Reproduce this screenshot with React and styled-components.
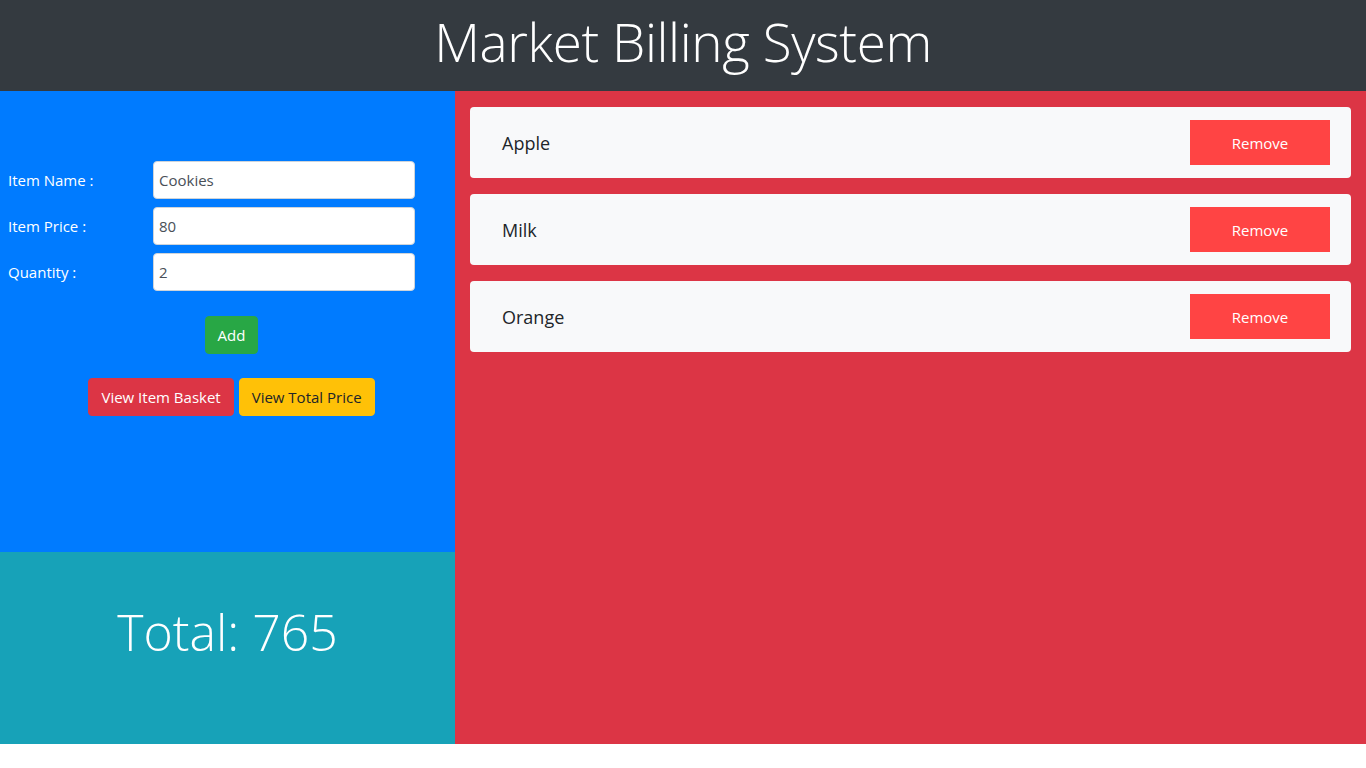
import React, { useState } from 'react';
import styled, { createGlobalStyle } from 'styled-components';

const GlobalStyle = createGlobalStyle`
  * { box-sizing: border-box; }
  body {
    margin: 0;
    font-family: "Open Sans", "Noto Sans", sans-serif;
    font-size: 16px;
    color: #212529;
    background: #fff;
  }
`;

const Header = styled.header`
  height: 91px;
  background: #343a40;
  color: #fff;
  display: flex;
  align-items: center;
  justify-content: center;
  padding-bottom: 9px;
`;

const Title = styled.h1`
  margin: 0;
  font-size: 53px;
  font-weight: 300;
  letter-spacing: -0.4px;
`;

const Main = styled.main`
  display: grid;
  grid-template-columns: 455px 1fr;
  height: 653px;
`;

const LeftCol = styled.div`
  display: grid;
  grid-template-rows: 461px 1fr;
`;

const FormPanel = styled.div`
  background: #007bff;
  padding: 70px 40px 0 8px;
`;

const FieldRow = styled.div`
  display: grid;
  grid-template-columns: 145px 262px;
  align-items: center;
  margin-bottom: 8px;
`;

const Label = styled.label`
  color: #fff;
  font-size: 15px;
`;

const Input = styled.input`
  height: 38px;
  width: 100%;
  border: 1px solid #ced4da;
  border-radius: 4px;
  padding: 0 5px;
  font-family: inherit;
  font-size: 15px;
  color: #495057;
  background: #fff;
`;

const Centered = styled.div`
  display: flex;
  justify-content: center;
  gap: 5px;
  margin-top: ${p => p.$top}px;
  padding-left: ${p => p.$shift}px;
`;

const Btn = styled.button`
  height: 38px;
  padding: 0 12px;
  border: 1px solid ${p => p.$bg};
  border-radius: 4px;
  background: ${p => p.$bg};
  color: ${p => p.$fg || '#fff'};
  font-family: inherit;
  font-size: 15px;
  cursor: pointer;
`;

const TotalPanel = styled.div`
  background: #17a2b8;
  color: #fff;
  display: flex;
  align-items: center;
  justify-content: center;
  padding-bottom: 32px;
`;

const TotalText = styled.div`
  font-size: 50px;
  font-weight: 300;
`;

const Basket = styled.div`
  background: #dc3545;
  padding: 16px 15px;
  display: flex;
  flex-direction: column;
  gap: 16px;
`;

const ItemCard = styled.div`
  height: 71px;
  background: #f8f9fa;
  border-radius: 4px;
  display: flex;
  align-items: center;
  justify-content: space-between;
  padding: 0 21px 0 32px;
`;

const ItemName = styled.span`
  font-size: 18px;
  color: #212529;
`;

const RemoveBtn = styled.button`
  width: 140px;
  height: 45px;
  border: none;
  background: #ff4444;
  color: #fff;
  font-family: inherit;
  font-size: 15px;
  cursor: pointer;
`;

export default function App() {
  const [items, setItems] = useState(['Apple', 'Milk', 'Orange']);

  return (
    <>
      <GlobalStyle />
      <Header>
        <Title>Market Billing System</Title>
      </Header>
      <Main>
        <LeftCol>
          <FormPanel>
            <FieldRow>
              <Label>Item Name :</Label>
              <Input defaultValue="Cookies" />
            </FieldRow>
            <FieldRow>
              <Label>Item Price :</Label>
              <Input defaultValue="80" />
            </FieldRow>
            <FieldRow>
              <Label>Quantity :</Label>
              <Input defaultValue="2" />
            </FieldRow>
            <Centered $top={25} $shift={40}>
              <Btn $bg="#28a745">Add</Btn>
            </Centered>
            <Centered $top={24} $shift={40}>
              <Btn $bg="#dc3545">View Item Basket</Btn>
              <Btn $bg="#ffc107" $fg="#212529">View Total Price</Btn>
            </Centered>
          </FormPanel>
          <TotalPanel>
            <TotalText>Total: 765</TotalText>
          </TotalPanel>
        </LeftCol>
        <Basket>
          {items.map(name => (
            <ItemCard key={name}>
              <ItemName>{name}</ItemName>
              <RemoveBtn onClick={() => setItems(items.filter(i => i !== name))}>Remove</RemoveBtn>
            </ItemCard>
          ))}
        </Basket>
      </Main>
    </>
  );
}
